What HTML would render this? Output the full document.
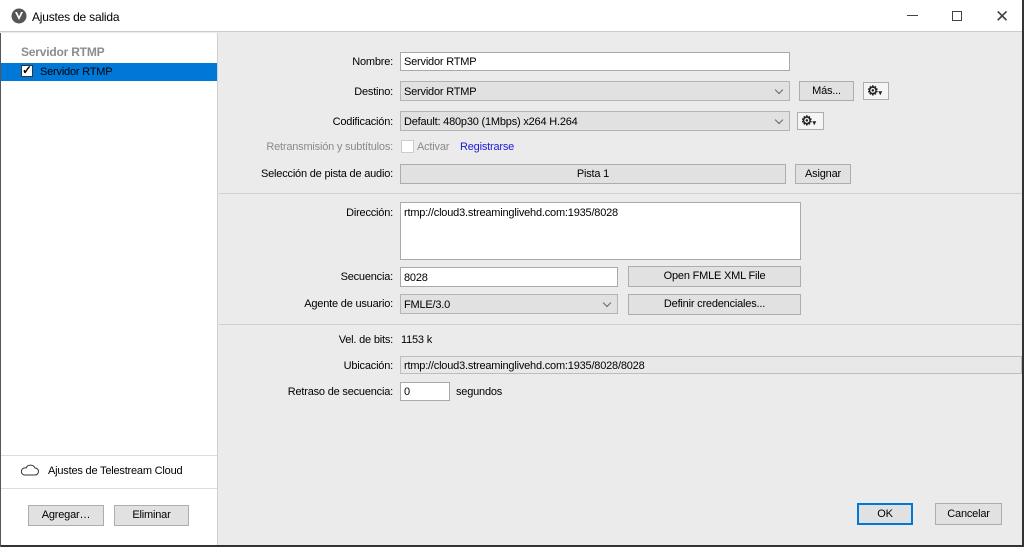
<!DOCTYPE html>
<html><head><meta charset="utf-8"><style>
*{box-sizing:border-box;margin:0;padding:0}
body{width:1024px;height:547px;overflow:hidden;background:#ebebeb;font-family:"Liberation Sans",Tahoma,sans-serif;font-size:11px;letter-spacing:-0.2px;color:#000;position:relative}
.a{position:absolute}
.lbl{position:absolute;right:631px;text-align:right;white-space:nowrap}
.in{position:absolute;background:#fff;border:1px solid #a9a9a9;padding:3px 3px;white-space:nowrap;overflow:hidden}
.cb{position:absolute;background:#e1e1e1;border:1px solid #b4b4b4;padding:4px 3px;white-space:nowrap}
.cb:after{content:"";position:absolute;right:7px;top:5px;width:5px;height:5px;border-right:1px solid #666;border-bottom:1px solid #666;transform:rotate(45deg)}
.bt{position:absolute;background:#e1e1e1;border:1px solid #adadad;text-align:center;line-height:19px;white-space:nowrap}
.g{position:absolute;background:#f5f5f5;border:1px solid #adadad;font-size:13px;line-height:16px;padding-left:3px;color:#222;font-weight:bold}
.sep{position:absolute;left:219px;right:2px;height:1px;background:#cfcfcf}
</style></head><body>
<div class="a" style="left:0;top:0;width:1024px;height:32px;background:#fff;border-bottom:1px solid #ccc"></div>
<svg class="a" style="left:11px;top:8px" width="16" height="16"><circle cx="8" cy="8" r="7.5" fill="#555"/><path d="M4 4 L8 12 L12 4 L10 4 L8 8.5 L6 4Z" fill="#fff"/></svg>
<div class="a" style="left:32px;top:10px;font-size:12px">Ajustes de salida</div>
<div class="a" style="left:907px;top:15px;width:11px;height:1px;background:#444"></div>
<div class="a" style="left:952px;top:11px;width:10px;height:10px;border:1px solid #444"></div>
<div class="a" style="left:995px;top:7px;font-size:17px;color:#444;font-weight:300">✕</div>
<div class="a" style="left:0;top:33px;width:218px;height:512px;background:#fff;border-right:1px solid #d0d0d0"></div>
<div class="a" style="left:21px;top:45px;color:#8c8c8c;font-weight:bold;font-size:12px">Servidor RTMP</div>
<div class="a" style="left:1px;top:63px;width:216px;height:18px;background:#0078d7"></div>
<div class="a" style="left:21px;top:65px;width:12px;height:12px;background:#fff;border:1px solid #333;font-size:12px;line-height:9px;font-weight:bold">✓</div>
<div class="a" style="left:40px;top:66px">Servidor RTMP</div>
<div class="a" style="left:1px;top:455px;width:216px;height:1px;background:#ddd"></div>
<svg class="a" style="left:20px;top:463px" width="20" height="14"><path d="M4 12 H15 A3.5 3.5 0 0 0 15 5 A5 5 0 0 0 6 5 A3.5 3.5 0 0 0 4 12Z" fill="none" stroke="#333" stroke-width="1"/></svg>
<div class="a" style="left:48px;top:465px">Ajustes de Telestream Cloud</div>
<div class="a" style="left:1px;top:488px;width:216px;height:1px;background:#ddd"></div>
<div class="bt" style="left:28px;top:505px;width:76px;height:21px">Agregar…</div>
<div class="bt" style="left:114px;top:505px;width:75px;height:21px">Eliminar</div>

<div class="lbl" style="top:56px">Nombre:</div>
<div class="in" style="left:400px;top:52px;width:390px;height:19px">Servidor RTMP</div>
<div class="lbl" style="top:86px">Destino:</div>
<div class="cb" style="left:400px;top:81px;width:390px;height:20px">Servidor RTMP</div>
<div class="bt" style="left:799px;top:81px;width:55px;height:20px">Más...</div>
<div class="g" style="left:863px;top:82px;width:26px;height:18px">⚙<span style="font-size:7px">▾</span></div>
<div class="lbl" style="top:116px">Codificación:</div>
<div class="cb" style="left:400px;top:111px;width:390px;height:20px">Default: 480p30 (1Mbps) x264 H.264</div>
<div class="g" style="left:797px;top:112px;width:27px;height:18px">⚙<span style="font-size:7px">▾</span></div>
<div class="lbl" style="top:141px;color:#8a8a8a">Retransmisión y subtítulos:</div>
<div class="a" style="left:401px;top:140px;width:13px;height:13px;background:#fff;border:1px solid #ccc"></div>
<div class="a" style="left:417px;top:141px;color:#8a8a8a">Activar</div>
<div class="a" style="left:460px;top:141px;color:#1a1adc">Registrarse</div>
<div class="lbl" style="top:168px">Selección de pista de audio:</div>
<div class="bt" style="left:400px;top:164px;width:386px;height:20px">Pista 1</div>
<div class="bt" style="left:795px;top:164px;width:56px;height:20px">Asignar</div>
<div class="sep" style="top:193px"></div>
<div class="lbl" style="top:207px">Dirección:</div>
<div class="in" style="left:400px;top:202px;width:401px;height:58px;padding-top:4px">rtmp://cloud3.streaminglivehd.com:1935/8028</div>
<div class="lbl" style="top:271px">Secuencia:</div>
<div class="in" style="left:400px;top:267px;width:218px;height:20px;padding-top:4px">8028</div>
<div class="bt" style="left:628px;top:266px;width:173px;height:21px">Open FMLE XML File</div>
<div class="lbl" style="top:298px">Agente de usuario:</div>
<div class="cb" style="left:400px;top:294px;width:218px;height:20px">FMLE/3.0</div>
<div class="bt" style="left:628px;top:294px;width:173px;height:21px">Definir credenciales...</div>
<div class="sep" style="top:324px"></div>
<div class="lbl" style="top:334px">Vel. de bits:</div>
<div class="a" style="left:401px;top:334px">1153 k</div>
<div class="lbl" style="top:360px">Ubicación:</div>
<div class="in" style="left:400px;top:356px;width:622px;height:18px;background:#e8e8e8;border-color:#bdbdbd;padding-top:3px">rtmp://cloud3.streaminglivehd.com:1935/8028/8028</div>
<div class="lbl" style="top:386px">Retraso de secuencia:</div>
<div class="in" style="left:400px;top:382px;width:50px;height:19px;padding-top:3px">0</div>
<div class="a" style="left:456px;top:386px">segundos</div>
<div class="bt" style="left:857px;top:503px;width:56px;height:22px;border:2px solid #0078d7;line-height:18px">OK</div>
<div class="bt" style="left:935px;top:503px;width:67px;height:22px;line-height:20px">Cancelar</div>
<div class="a" style="left:1022px;top:0;width:2px;height:547px;background:#333"></div>
<div class="a" style="left:0;top:545px;width:1024px;height:2px;background:#333"></div>
<div class="a" style="left:0;top:33px;width:1px;height:514px;background:#555"></div>
</body></html>
